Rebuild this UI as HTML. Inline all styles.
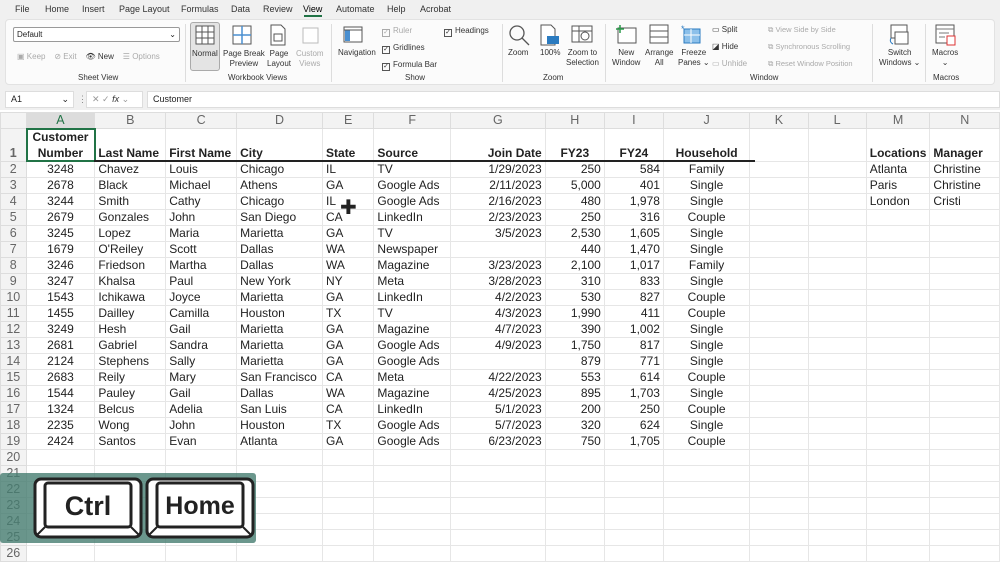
<!DOCTYPE html>
<html><head><meta charset="utf-8">
<style>
*{box-sizing:border-box;margin:0;padding:0}
body{width:1000px;height:563px;overflow:hidden;background:#fff;font-family:"Liberation Sans",sans-serif;position:relative;color:#222}
.a{position:absolute;white-space:nowrap}
#top{position:absolute;left:0;top:0;width:1000px;height:110px;background:#f0f0f0}
.tab{font-size:9px;top:4px;color:#333}
#rib{position:absolute;left:5px;top:19px;width:990px;height:66px;background:#fbfbfb;border-radius:4px;border:1px solid #e2e2e2}
.s{font-size:8px;color:#333}
.g{color:#aaa}
.gl{font-size:8px;color:#333;top:73px}
.sep{position:absolute;top:24px;width:1px;height:58px;background:#ddd}
.cb{display:inline-block;width:8px;height:8px;border:1px solid #555;margin-right:3px;vertical-align:-1px;font-size:7px;line-height:6px;text-align:center}
#fb{position:absolute;top:91px;height:17px;background:#fff;border:1px solid #ddd;font-size:9px;line-height:15px;padding-left:5px}
table{position:absolute;left:0;top:112px;border-collapse:collapse;table-layout:fixed;font-size:12px}
td{border:1px solid #e6e6e6;height:16px;padding:0 3px;white-space:nowrap;overflow:hidden;line-height:15px}
tr.h td{background:#f3f3f3;color:#666;text-align:center;font-size:12.5px;height:16px;border-color:#ddd}
td.rh{background:#f3f3f3;color:#666;text-align:center;font-size:12.5px;padding:0;border-color:#ddd}
td.r{text-align:right}td.c{text-align:center}
tr.r1 td{height:33px;vertical-align:bottom;font-weight:bold}
</style></head><body>
<div id="top"></div>
<div class="a tab" style="left:15px">File</div><div class="a tab" style="left:45px">Home</div><div class="a tab" style="left:82px">Insert</div><div class="a tab" style="left:119px">Page Layout</div><div class="a tab" style="left:181px">Formulas</div><div class="a tab" style="left:231px">Data</div><div class="a tab" style="left:263px">Review</div><div class="a tab" style="left:303px;color:#000">View</div><div class="a" style="left:304px;top:15px;width:18px;height:2px;background:#217346"></div><div class="a tab" style="left:336px">Automate</div><div class="a tab" style="left:387px">Help</div><div class="a tab" style="left:420px">Acrobat</div>
<div id="rib"></div>
<div class="a" style="left:13px;top:27px;width:167px;height:15px;border:1px solid #999;border-radius:2px;background:#fff;font-size:8px;padding:2px 3px">Default<span style="float:right">⌄</span></div>
<div class="a s g" style="left:17px;top:52px">▣ Keep &nbsp;&nbsp; ⊘ Exit &nbsp;&nbsp; <span style="color:#333">👁 New</span> &nbsp;&nbsp; ☰ Options</div>
<div class="a gl" style="left:78px">Sheet View</div>
<div class="sep" style="left:185px"></div>
<div class="a" style="left:190px;top:22px;width:30px;height:49px;background:#e4e4e4;border:1px solid #aaa;border-radius:3px"></div>
<svg class="a" style="left:195px;top:25px" width="20" height="20"><rect x="1" y="1" width="18" height="18" fill="#fff" stroke="#555"/><path d="M7 1V19M13 1V19M1 7H19M1 13H19" stroke="#555"/></svg>
<svg class="a" style="left:232px;top:25px" width="20" height="20"><rect x="1" y="1" width="18" height="18" fill="#fff" stroke="#555"/><path d="M10 1V19M1 10H19" stroke="#4a8fd0" stroke-width="1.5"/></svg>
<svg class="a" style="left:270px;top:24px" width="16" height="22"><path d="M1 1H11L15 5V21H1Z" fill="#fff" stroke="#555"/><rect x="4" y="10" width="8" height="7" fill="none" stroke="#555"/></svg>
<svg class="a" style="left:300px;top:25px" width="20" height="20"><rect x="3" y="3" width="15" height="15" fill="#fff" stroke="#bbb"/></svg>
<div class="a s" style="left:192px;top:49px">Normal</div>
<div class="a s" style="left:223px;top:49px;text-align:center;line-height:10px">Page Break<br>Preview</div>
<div class="a s" style="left:267px;top:49px;text-align:center;line-height:10px">Page<br>Layout</div>
<div class="a s g" style="left:296px;top:49px;text-align:center;line-height:10px">Custom<br>Views</div>
<div class="a gl" style="left:228px">Workbook Views</div>
<div class="sep" style="left:331px"></div>
<svg class="a" style="left:343px;top:26px" width="20" height="17"><rect x="1" y="1" width="18" height="15" fill="#fff" stroke="#555"/><rect x="2" y="4" width="5" height="11" fill="#4a8fd0"/><path d="M1 4H19" stroke="#555"/></svg>
<div class="a s" style="left:338px;top:48px">Navigation</div>
<div class="a s g" style="left:382px;top:26px"><span class="cb" style="border-color:#aaa">✓</span>Ruler</div>
<div class="a s" style="left:382px;top:43px"><span class="cb">✓</span>Gridlines</div>
<div class="a s" style="left:382px;top:60px"><span class="cb">✓</span>Formula Bar</div>
<div class="a s" style="left:444px;top:26px"><span class="cb">✓</span>Headings</div>
<div class="a gl" style="left:405px">Show</div>
<div class="sep" style="left:502px"></div>
<svg class="a" style="left:508px;top:24px" width="22" height="22"><circle cx="9" cy="9" r="7" fill="none" stroke="#555" stroke-width="1.3"/><path d="M14 14L21 21" stroke="#555" stroke-width="1.3"/></svg>
<svg class="a" style="left:540px;top:24px" width="20" height="22"><path d="M1 1H11L15 5V21H1Z" fill="#fff" stroke="#555"/><rect x="7" y="12" width="12" height="8" fill="#2b7bc0"/></svg>
<svg class="a" style="left:571px;top:25px" width="22" height="20"><rect x="1" y="1" width="20" height="16" fill="#fff" stroke="#555"/><path d="M1 6H21M8 1V17" stroke="#555"/><circle cx="14" cy="11" r="4" fill="none" stroke="#555"/></svg>
<div class="a s" style="left:508px;top:48px">Zoom</div><div class="a s" style="left:540px;top:48px">100%</div>
<div class="a s" style="left:566px;top:48px;text-align:center;line-height:10px">Zoom to<br>Selection</div>
<div class="a gl" style="left:543px">Zoom</div>
<div class="sep" style="left:605px"></div>
<svg class="a" style="left:615px;top:24px" width="22" height="20"><rect x="3" y="4" width="18" height="15" fill="#fff" stroke="#555"/><path d="M5 1V9M1 5H9" stroke="#2a9a4a" stroke-width="1.5"/></svg>
<svg class="a" style="left:649px;top:24px" width="20" height="20"><rect x="1" y="1" width="18" height="18" fill="#fff" stroke="#555"/><path d="M1 7H19M1 13H19" stroke="#555"/></svg>
<svg class="a" style="left:681px;top:24px" width="20" height="20"><rect x="3" y="5" width="16" height="14" fill="#8cc0ea" stroke="#2b7bc0"/><path d="M3 11H19M10 5V19" stroke="#fff"/><text x="0" y="8" font-size="9" fill="#2b7bc0">*</text></svg>
<div class="a s" style="left:612px;top:48px;text-align:center;line-height:10px">New<br>Window</div>
<div class="a s" style="left:645px;top:48px;text-align:center;line-height:10px">Arrange<br>All</div>
<div class="a s" style="left:678px;top:48px;text-align:center;line-height:10px">Freeze<br>Panes ⌄</div>
<div class="a s" style="left:712px;top:25px">▭ Split</div>
<div class="a s" style="left:712px;top:42px">◪ Hide</div>
<div class="a s g" style="left:712px;top:59px">▭ Unhide</div>
<div class="a s g" style="left:768px;top:25px;font-size:7.5px">⧉ View Side by Side</div>
<div class="a s g" style="left:768px;top:42px;font-size:7.5px">⧉ Synchronous Scrolling</div>
<div class="a s g" style="left:768px;top:59px;font-size:7.5px">⧉ Reset Window Position</div>
<div class="a gl" style="left:750px">Window</div>
<div class="sep" style="left:872px"></div>
<svg class="a" style="left:887px;top:24px" width="22" height="22"><rect x="4" y="1" width="16" height="13" fill="#fff" stroke="#555"/><rect x="8" y="8" width="13" height="12" fill="#fff" stroke="#555"/><path d="M4 14Q2 18 6 20" stroke="#2b7bc0" fill="none"/></svg>
<div class="a s" style="left:879px;top:48px;text-align:center;line-height:10px">Switch<br>Windows ⌄</div>
<div class="sep" style="left:925px"></div>
<svg class="a" style="left:935px;top:24px" width="22" height="22"><rect x="1" y="1" width="18" height="18" fill="#fff" stroke="#555"/><path d="M1 5H19M4 9H14M4 13H10" stroke="#777"/><rect x="12" y="12" width="8" height="9" fill="#fff" stroke="#d33"/></svg>
<div class="a s" style="left:932px;top:48px;text-align:center;line-height:10px">Macros<br>⌄</div>
<div class="a gl" style="left:933px">Macros</div>
<div id="fb" style="left:5px;width:69px">A1<span style="float:right;padding-right:4px">⌄</span></div>
<div class="a" style="left:78px;top:94px;font-size:9px;color:#888">⋮</div>
<div id="fb" style="left:86px;width:57px;color:#999">✕ ✓ <i style="color:#333">fx</i> ⌄</div>
<div id="fb" style="left:147px;width:853px">Customer</div>
<table id="t"><colgroup><col style="width:26px"><col style="width:69px"><col style="width:71px"><col style="width:71px"><col style="width:86px"><col style="width:52px"><col style="width:77px"><col style="width:96px"><col style="width:60px"><col style="width:60px"><col style="width:87px"><col style="width:60px"><col style="width:60px"><col style="width:60px"><col style="width:70px"></colgroup></table>
<div class="a" style="left:26px;top:128px;width:70px;height:34px;border:2px solid #217346"></div>
<div class="a" style="left:94px;top:160px;width:661px;height:2px;background:#222"></div>
<div class="a" style="left:340px;top:195px;font-size:20px;color:#222">✚</div>
<div class="a" style="left:0;top:473px;width:256px;height:70px;background:rgba(70,125,112,0.8);border-radius:3px"></div>
<svg class="a" style="left:33px;top:477px" width="222" height="62">
<g stroke="#222" stroke-width="3" fill="#fff"><rect x="2" y="2" width="106" height="58" rx="6"/><rect x="12" y="6" width="86" height="44" rx="3"/><path d="M12 50L4 58M98 50L106 58" stroke-width="2"/>
<rect x="114" y="2" width="106" height="58" rx="6"/><rect x="124" y="6" width="86" height="44" rx="3"/><path d="M124 50L116 58M210 50L218 58" stroke-width="2"/></g>
<text x="55" y="38" font-size="27" font-weight="bold" text-anchor="middle" font-family="Liberation Sans" fill="#222">Ctrl</text>
<text x="167" y="37" font-size="25" font-weight="bold" text-anchor="middle" font-family="Liberation Sans" fill="#222">Home</text></svg>
<script>
var d=[["3248","Chavez","Louis","Chicago","IL","TV","1/29/2023","250","584","Family"],["2678","Black","Michael","Athens","GA","Google Ads","2/11/2023","5,000","401","Single"],["3244","Smith","Cathy","Chicago","IL","Google Ads","2/16/2023","480","1,978","Single"],["2679","Gonzales","John","San Diego","CA","LinkedIn","2/23/2023","250","316","Couple"],["3245","Lopez","Maria","Marietta","GA","TV","3/5/2023","2,530","1,605","Single"],["1679","O'Reiley","Scott","Dallas","WA","Newspaper","","440","1,470","Single"],["3246","Friedson","Martha","Dallas","WA","Magazine","3/23/2023","2,100","1,017","Family"],["3247","Khalsa","Paul","New York","NY","Meta","3/28/2023","310","833","Single"],["1543","Ichikawa","Joyce","Marietta","GA","LinkedIn","4/2/2023","530","827","Couple"],["1455","Dailley","Camilla","Houston","TX","TV","4/3/2023","1,990","411","Couple"],["3249","Hesh","Gail","Marietta","GA","Magazine","4/7/2023","390","1,002","Single"],["2681","Gabriel","Sandra","Marietta","GA","Google Ads","4/9/2023","1,750","817","Single"],["2124","Stephens","Sally","Marietta","GA","Google Ads","","879","771","Single"],["2683","Reily","Mary","San Francisco","CA","Meta","4/22/2023","553","614","Couple"],["1544","Pauley","Gail","Dallas","WA","Magazine","4/25/2023","895","1,703","Single"],["1324","Belcus","Adelia","San Luis","CA","LinkedIn","5/1/2023","200","250","Couple"],["2235","Wong","John","Houston","TX","Google Ads","5/7/2023","320","624","Single"],["2424","Santos","Evan","Atlanta","GA","Google Ads","6/23/2023","750","1,705","Couple"]];
var mn=[["Atlanta","Christine"],["Paris","Christine"],["London","Cristi"]];
var h='<tr class="h"><td></td>'+"ABCDEFGHIJKLMN".split("").map(function(c){return '<td'+(c=="A"?' style="color:#217346;background:#dcdcdc"':'')+'>'+c+'</td>'}).join("")+'</tr>';
h+='<tr class="r1"><td class="rh" style="vertical-align:bottom">1</td><td class="c" style="line-height:16px">Customer<br>Number</td><td>Last Name</td><td>First Name</td><td>City</td><td>State</td><td>Source</td><td class="r">Join Date</td><td class="c">FY23</td><td class="c">FY24</td><td class="c">Household</td><td></td><td></td><td>Locations</td><td>Manager</td></tr>';
for(var i=2;i<=26;i++){var r=d[i-2];h+='<tr><td class="rh">'+i+'</td>';
if(r){h+='<td class="c">'+r[0]+'</td><td>'+r[1]+'</td><td>'+r[2]+'</td><td>'+r[3]+'</td><td>'+r[4]+'</td><td>'+r[5]+'</td><td class="r">'+r[6]+'</td><td class="r">'+r[7]+'</td><td class="r">'+r[8]+'</td><td class="c">'+r[9]+'</td>';}else h+='<td></td><td></td><td></td><td></td><td></td><td></td><td></td><td></td><td></td><td></td>';
var m=mn[i-2];h+='<td></td><td></td><td>'+(m?m[0]:'')+'</td><td>'+(m?m[1]:'')+'</td></tr>';}
document.getElementById("t").insertAdjacentHTML("beforeend",h);
</script>
</body></html>
